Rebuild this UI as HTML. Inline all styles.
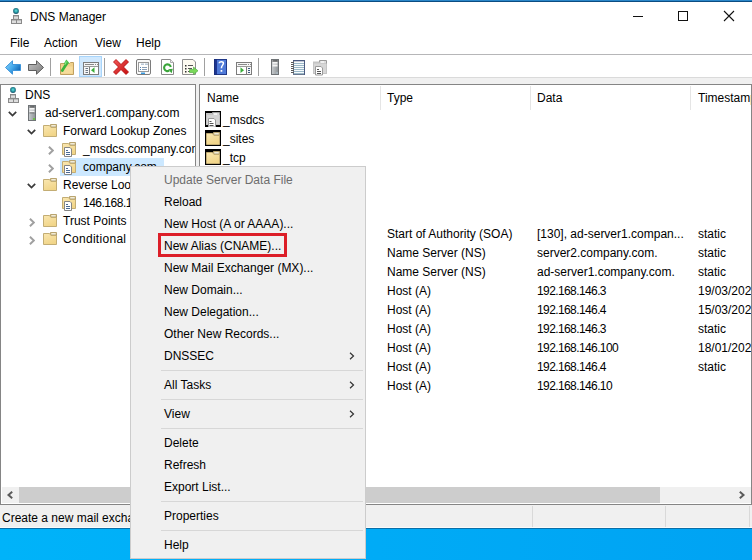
<!DOCTYPE html>
<html><head><meta charset="utf-8">
<style>
*{margin:0;padding:0;box-sizing:border-box}
html,body{width:752px;height:560px;overflow:hidden;background:#fff}
body{position:relative;font-family:"Liberation Sans",sans-serif;font-size:12px;color:#000}
.a{position:absolute}
.t{position:absolute;font:12px/14px "Liberation Sans",sans-serif;white-space:nowrap}
svg{position:absolute;overflow:visible}
</style></head><body>
<svg width="0" height="0" style="position:absolute">
<defs>
 <linearGradient id="fg" x1="0" y1="0" x2="0.4" y2="1"><stop offset="0" stop-color="#fae7b0"/><stop offset="1" stop-color="#f1d589"/></linearGradient>
 <linearGradient id="sg" x1="0" y1="0" x2="1" y2="0"><stop offset="0" stop-color="#c9cdd0"/><stop offset="1" stop-color="#8d9295"/></linearGradient>
 <radialGradient id="glb" cx="0.5" cy="0.45" r="0.55"><stop offset="0" stop-color="#6fe0e0"/><stop offset="0.5" stop-color="#2aa0a8"/><stop offset="1" stop-color="#18506a"/></radialGradient>
 <symbol id="dnsic" viewBox="0 0 12 16">
  <circle cx="5" cy="3" r="2.9" fill="url(#glb)"/>
  <rect x="2.5" y="7.5" width="5" height="3.5" fill="#bdbdbd" stroke="#8a8a8a"/>
  <rect x="3" y="9.5" width="4" height="1" fill="#fff"/>
  <rect x="0.5" y="11.5" width="5" height="4" fill="#bdbdbd" stroke="#8a8a8a"/>
  <rect x="5.5" y="11.5" width="5" height="4" fill="#bdbdbd" stroke="#8a8a8a"/>
  <rect x="1" y="13.5" width="4" height="1" fill="#fff"/>
  <rect x="6" y="13.5" width="4" height="1" fill="#fff"/>
 </symbol>
 <symbol id="folder" viewBox="0 0 14 13">
  <path d="M7.5 0.5H13.5V6H7.5Z" fill="#e2cf98" stroke="#b9a470"/>
  <rect x="8.5" y="1.2" width="4" height="1.5" fill="#f6f3e8"/>
  <rect x="8" y="2.7" width="5.5" height="0.9" fill="#8f8262"/>
  <path d="M0.5 1.5H6.5L8 3.5H13.5V12.5H0.5Z" fill="url(#fg)" stroke="#c3ad74"/>
 </symbol>
 <symbol id="zone" viewBox="0 0 16 16">
  <path d="M7.5 0.5H13.5V6H7.5Z" fill="#e2cf98" stroke="#b9a470"/>
  <rect x="8.5" y="1.2" width="4" height="1.5" fill="#f6f3e8"/>
  <rect x="8" y="2.7" width="5.5" height="0.9" fill="#8f8262"/>
  <path d="M0.5 1.5H6.5L8 3.5H13.5V12.5H0.5Z" fill="url(#fg)" stroke="#c3ad74"/>
  <path d="M2.5 5.5H8L9.5 7V14.5H2.5Z" fill="#fff" stroke="#858585"/>
  <rect x="4" y="8" width="2" height="1" fill="#4a6a94"/>
  <rect x="4" y="10" width="4" height="1" fill="#4a6a94"/>
  <rect x="4" y="12" width="4" height="1" fill="#4a6a94"/>
 </symbol>
 <symbol id="server" viewBox="0 0 8 16">
  <rect x="0.5" y="0.5" width="7" height="15" fill="url(#sg)" stroke="#6f7376"/>
  <rect x="1.5" y="1.5" width="5" height="1.2" fill="#2c2c2c"/>
  <rect x="1.5" y="2.7" width="5" height="2" fill="#f4f4f4"/>
  <rect x="1.5" y="5.5" width="5" height="2" fill="#f4f4f4"/>
  <rect x="1.5" y="7.5" width="5" height="0.8" fill="#555"/>
  <rect x="5" y="13" width="2" height="2" fill="#6cc04a"/>
 </symbol>
 <symbol id="chd" viewBox="0 0 9 6"><path d="M0.8 0.8L4.5 4.6L8.2 0.8" fill="none" stroke="#3a3a3a" stroke-width="1.7"/></symbol>
 <symbol id="chr" viewBox="0 0 6 9"><path d="M0.9 0.8L4.8 4.5L0.9 8.2" fill="none" stroke="#a0a0a0" stroke-width="1.9"/></symbol>

 <symbol id="folder16" viewBox="0 0 16 16">
  <rect width="16" height="16" fill="#000"/>
  <g transform="translate(1,2)">
  <path d="M7.5 0.5H13.5V6H7.5Z" fill="#e2cf98" stroke="#b9a470"/>
  <rect x="8.5" y="1.2" width="4" height="1.5" fill="#f6f3e8"/>
  <rect x="8" y="2.7" width="5.5" height="0.9" fill="#8f8262"/>
  <path d="M0.5 1.5H6.5L8 3.5H13.5V12.5H0.5Z" fill="url(#fg)" stroke="#c3ad74"/>
  </g>
 </symbol>
 <symbol id="zone16" viewBox="0 0 16 16">
  <rect width="16" height="16" fill="#000"/>
  <g transform="translate(1,1)">
  <path d="M6.5 0.5H13.5V6H6.5Z" fill="#d8d8d8" stroke="#a0a0a0"/>
  <rect x="8" y="1.3" width="3" height="1.6" fill="#f8f8f8"/>
  <path d="M0 1H6L7.5 3H14V13H0Z" fill="#c4c4c4"/>
  <rect x="1" y="3" width="12" height="9" fill="#d4d4d4"/>
  <path d="M2.5 6.5H8L9.5 8V15H2.5Z" fill="#fff" stroke="#9a9a9a"/>
  <rect x="3.5" y="9" width="2" height="1" fill="#555"/>
  <rect x="3.5" y="11" width="4" height="1" fill="#555"/>
  <rect x="3.5" y="13" width="4" height="1" fill="#555"/>
  </g>
 </symbol>
</defs></svg>
<!-- top border -->
<div class="a" style="left:0;top:0;width:752px;height:1px;background:#2b87c9"></div>
<div class="a" style="left:0;top:1px;width:752px;height:1px;background:#0b4d82"></div>

<!-- title -->
<svg style="left:11px;top:8px" width="12" height="16"><use href="#dnsic"/></svg>
<div class="t" style="left:30px;top:10px">DNS Manager</div>
<!-- window controls -->
<div class="a" style="left:633px;top:16px;width:10px;height:1px;background:#111"></div>
<div class="a" style="left:678px;top:11px;width:10px;height:10px;border:1px solid #111"></div>
<svg style="left:724px;top:11px" width="10" height="10" viewBox="0 0 10 10"><path d="M0 0L10 10M10 0L0 10" stroke="#111" stroke-width="1.1"/></svg>

<!-- toolbar icons -->
<svg style="left:0;top:0" width="752" height="80" viewBox="0 0 752 80">
 <defs>
  <linearGradient id="bl" x1="0" y1="0.2" x2="1" y2="0.8"><stop offset="0" stop-color="#86d0f8"/><stop offset="0.45" stop-color="#45aaec"/><stop offset="1" stop-color="#0b5eae"/></linearGradient>
  <linearGradient id="gr" x1="0" y1="0" x2="1" y2="1"><stop offset="0" stop-color="#c4c4c4"/><stop offset="1" stop-color="#7d7d7d"/></linearGradient>
  <linearGradient id="rd" x1="0" y1="0" x2="1" y2="1"><stop offset="0" stop-color="#f25a5a"/><stop offset="1" stop-color="#c40d0d"/></linearGradient>
  <linearGradient id="hb" x1="0" y1="0" x2="1" y2="0"><stop offset="0" stop-color="#1f3f9a"/><stop offset="0.25" stop-color="#3560c8"/><stop offset="1" stop-color="#4a74d8"/></linearGradient>
 </defs>
 <!-- back -->
 <path d="M5.5 67.5 L12.5 60.8 V64.5 H20.5 V70.5 H12.5 V74.2 Z" fill="url(#bl)" stroke="#3d94da" stroke-width="1" stroke-linejoin="round"/>
 <!-- forward -->
 <path d="M43.5 67.5 L36.5 60.8 V64.5 H28.5 V70.5 H36.5 V74.2 Z" fill="url(#gr)" stroke="#5e5e5e" stroke-width="1" stroke-linejoin="round"/>
 <rect x="50" y="58" width="1" height="18" fill="#a0a0a0"/>
 <!-- up folder -->
 <path d="M60.5 63.5 H69.5 L70.5 62.5 H73.5 V74.5 H60.5 Z" fill="#efd08a" stroke="#c0a060"/>
 <path d="M61.5 66.5 H72.5 V73.5 H61.5Z" fill="#f6dc9c"/>
 <path d="M62.3 70.5 C63.5 68.5, 64.5 67, 66.8 63.5" fill="none" stroke="#3cb43c" stroke-width="2.8" stroke-linecap="round"/>
 <path d="M63.6 64 L66.3 59.6 L69.6 63.2 Z" fill="#4cc44c"/>
 <path d="M65.3 64.5 L66.2 61.3" stroke="#8ee88e" stroke-width="1"/>
 <!-- pressed console tree -->
 <rect x="79.5" y="56.5" width="22" height="20" fill="#d0e8fd" stroke="#a8d5fb"/>
 <rect x="83.5" y="62.5" width="15" height="12" fill="#f6f6f6" stroke="#7c7c7c"/>
 <rect x="85" y="64" width="9" height="1" fill="#8a8a8a"/><rect x="95" y="64" width="1" height="1" fill="#8a8a8a"/><rect x="97" y="64" width="1" height="1" fill="#8a8a8a"/>
 <rect x="84" y="66" width="14" height="1" fill="#9a9a9a"/>
 <rect x="89" y="67" width="1" height="7" fill="#7c7c7c"/>
 <rect x="85.5" y="68" width="2.5" height="1" fill="#6a7684"/><rect x="85.5" y="70" width="2.5" height="1" fill="#6a7684"/><rect x="85.5" y="72" width="2.5" height="1" fill="#6a7684"/>
 <rect x="90" y="67" width="8" height="7" fill="#fff"/>
 <path d="M94.5 67.3 V73 L91 70.2Z" fill="#3aae3a"/>
 <rect x="104" y="58" width="1" height="18" fill="#a0a0a0"/>
 <!-- red X -->
 <path d="M113.5 62 L116 59.5 L121 64.5 L126 59.5 L128.5 62 L123.5 67 L128.5 72 L126 74.5 L121 69.5 L116 74.5 L113.5 72 L118.5 67 Z" fill="url(#rd)" stroke="#b00000" stroke-width="0.8" stroke-linejoin="round"/>
 <!-- properties -->
 <rect x="136.5" y="59.5" width="14" height="15" rx="1.5" fill="#fafafa" stroke="#7c7c7c"/>
 <rect x="138.5" y="62.5" width="10" height="9" fill="#fff" stroke="#9a9a9a"/>
 <rect x="141" y="63.5" width="3" height="1.5" fill="#b8c8d8"/><rect x="145" y="63.5" width="3" height="1.5" fill="#b8c8d8"/>
 <rect x="140" y="67" width="1" height="1" fill="#4a80b8"/><rect x="142" y="67" width="5" height="1" fill="#8aa0b8"/>
 <rect x="140" y="69" width="1" height="1" fill="#4a80b8"/><rect x="142" y="69" width="5" height="1" fill="#8aa0b8"/>
 <rect x="141" y="72.5" width="4" height="1.5" fill="#3a9ae0"/>
 <!-- refresh -->
 <path d="M161.5 59.5 H170.5 L173.5 62.5 V74.5 H161.5 Z" fill="#fff" stroke="#8a8a8a"/>
 <path d="M170.5 59.5 V62.5 H173.5" fill="#f0f0f0" stroke="#9a9a9a" stroke-width="0.8"/>
 <path d="M170.8 66.9 A3.4 3.4 0 1 0 169.2 70.7" fill="none" stroke="#3aa53a" stroke-width="2.1"/>
 <path d="M168.2 69.2 L172.8 68.8 L171.6 73.2 Z" fill="#3aa53a"/>
 <!-- export -->
 <path d="M182.5 59.5 H193 L195.5 62 V74.5 H182.5 Z" fill="#fdfaf0" stroke="#8e8e8e"/>
 <rect x="185" y="65" width="1.5" height="1.5" fill="#333"/><rect x="188" y="65" width="5" height="1" fill="#555"/>
 <rect x="185" y="68" width="1.5" height="1.5" fill="#333"/><rect x="188" y="68" width="4" height="1" fill="#555"/>
 <rect x="185" y="71" width="1.5" height="1.5" fill="#333"/><rect x="188" y="71" width="3" height="1" fill="#555"/>
 <path d="M189.5 69.5 H193.5 V67 L198 70.8 L193.5 74.5 V72.5 H189.5Z" fill="#7ad85a" stroke="#4aa83a" stroke-width="0.6"/>
 <rect x="204" y="58" width="1" height="18" fill="#a0a0a0"/>
 <!-- help -->
 <rect x="214" y="59" width="13" height="16" fill="#3c64c8"/>
 <rect x="217" y="60" width="9" height="14" fill="#4f7ad8"/>
 <rect x="214" y="59" width="3" height="16" fill="#1d3590"/>
 <rect x="214.4" y="59.4" width="12.2" height="15.2" fill="none" stroke="#1a2e78" stroke-width="0.8"/>
 <path d="M219.2 63.2 C219.2 61.3, 223.4 61.3, 223.4 63.3 C223.4 65, 221.4 65.4, 221.4 68.3" fill="none" stroke="#fff" stroke-width="1.5"/>
 <rect x="220.6" y="70" width="1.7" height="1.8" fill="#fff"/>
 <!-- action pane -->
 <rect x="236.5" y="62.5" width="15" height="12" fill="#f6f6f6" stroke="#7c7c7c"/>
 <rect x="238" y="64" width="9" height="1" fill="#8a8a8a"/><rect x="248" y="64" width="1" height="1" fill="#8a8a8a"/><rect x="250" y="64" width="1" height="1" fill="#8a8a8a"/>
 <rect x="237" y="66" width="14" height="1" fill="#9a9a9a"/>
 <rect x="246" y="67" width="1" height="7" fill="#7c7c7c"/>
 <rect x="237" y="67" width="9" height="7" fill="#fff"/>
 <path d="M240.5 67.3 V73 L244 70.2Z" fill="#3aae3a"/>
 <rect x="248" y="68" width="2" height="1" fill="#3a5a80"/><rect x="248" y="70" width="2" height="1" fill="#3a5a80"/><rect x="248" y="72" width="2" height="1" fill="#3a5a80"/>
 <rect x="258" y="58" width="1" height="18" fill="#a0a0a0"/>
 <!-- server -->
 <rect x="271.5" y="59.5" width="7" height="15" fill="url(#sg)" stroke="#6f7376"/>
 <rect x="272.5" y="60.5" width="5" height="1.2" fill="#2c2c2c"/>
 <rect x="272.5" y="61.7" width="5" height="2" fill="#f4f4f4"/>
 <rect x="272.5" y="64.5" width="5" height="2" fill="#f4f4f4"/>
 <rect x="276" y="72" width="2" height="2" fill="#a8b4bc"/>
 <!-- notepad -->
 <rect x="293.5" y="60.5" width="11" height="14" fill="#f6fafc" stroke="#6a7890"/>
 <rect x="293" y="60" width="12" height="1.3" fill="#4a5a80"/>
 <rect x="304" y="60" width="1" height="15" fill="#4a5a80"/>
 <rect x="294" y="63" width="10" height="1" fill="#9ab8c8"/><rect x="294" y="65" width="10" height="1" fill="#9ab8c8"/>
 <rect x="294" y="67" width="10" height="1" fill="#9ab8c8"/><rect x="294" y="69" width="10" height="1" fill="#9ab8c8"/>
 <rect x="294" y="71" width="10" height="1" fill="#9ab8c8"/><rect x="294" y="73" width="10" height="1" fill="#9ab8c8"/>
 <path d="M291 62.5h3M291 64.5h3M291 66.5h3M291 68.5h3M291 70.5h3M291 72.5h3" stroke="#5a5a5a" stroke-width="1"/>
 <!-- zone copy -->
 <path d="M319.5 60.5H326.5V64H319.5Z" fill="#dcdcdc" stroke="#9a9a9a"/>
 <rect x="321" y="61.3" width="3" height="1.4" fill="#f8f8f8"/>
 <path d="M313 61.5H319L320.5 63.5H327V74H313Z" fill="#c4c4c4"/>
 <rect x="314" y="63.5" width="12" height="9.5" fill="#d6d6d6"/>
 <path d="M315.5 66.5H321L322.5 68V75H315.5Z" fill="#fff" stroke="#9a9a9a"/>
 <rect x="317" y="69" width="2" height="1" fill="#555"/>
 <rect x="317" y="71" width="4" height="1" fill="#555"/>
 <rect x="317" y="73" width="4" height="1" fill="#555"/>
</svg>
<!-- menu bar -->
<div class="t" style="left:10px;top:36px">File</div>
<div class="t" style="left:44px;top:36px">Action</div>
<div class="t" style="left:95px;top:36px">View</div>
<div class="t" style="left:136px;top:36px">Help</div>
<div class="a" style="left:0;top:54px;width:752px;height:1px;background:#b6b6b8"></div>

<!-- toolbar -->
<div class="a" style="left:0;top:77px;width:752px;height:451px;background:#f0f0f0"></div>
<div class="a" style="left:0;top:77px;width:752px;height:1px;background:#dadada"></div>

<!-- left pane -->
<div class="a" style="left:0;top:84px;width:196px;height:421px;background:#fff;border:1px solid #858585"></div>
<!-- tree -->
<div class="a" style="left:0;top:0;width:195px;height:487px;overflow:hidden">
 <div class="a" style="left:60px;top:158px;width:104px;height:18px;background:#cce8ff"></div>
 <svg style="left:8px;top:87px" width="12" height="16"><use href="#dnsic"/></svg>
 <div class="t" style="left:25px;top:88px">DNS</div>
 <svg style="left:8px;top:111px" width="9" height="6"><use href="#chd"/></svg>
 <svg style="left:28px;top:105px" width="8" height="16"><use href="#server"/></svg>
 <div class="t" style="left:45px;top:106px">ad-server1.company.com</div>
 <svg style="left:27px;top:129px" width="9" height="6"><use href="#chd"/></svg>
 <svg style="left:43px;top:124px" width="14" height="13"><use href="#folder"/></svg>
 <div class="t" style="left:63px;top:124px">Forward Lookup Zones</div>
 <svg style="left:48px;top:146px" width="6" height="9"><use href="#chr"/></svg>
 <svg style="left:62px;top:142px" width="16" height="16"><use href="#zone"/></svg>
 <div class="t" style="left:83px;top:142px">_msdcs.company.com</div>
 <svg style="left:48px;top:164px" width="6" height="9"><use href="#chr"/></svg>
 <svg style="left:62px;top:160px" width="16" height="16"><use href="#zone"/></svg>
 <div class="t" style="left:83px;top:160px">company.com</div>
 <svg style="left:27px;top:183px" width="9" height="6"><use href="#chd"/></svg>
 <svg style="left:43px;top:178px" width="14" height="13"><use href="#folder"/></svg>
 <div class="t" style="left:63px;top:178px">Reverse Lookup Zones</div>
 <svg style="left:62px;top:196px" width="16" height="16"><use href="#zone"/></svg>
 <div class="t" style="left:83px;top:196px;letter-spacing:-0.5px">146.168.192.in-addr.arpa</div>
 <svg style="left:29px;top:218px" width="6" height="9"><use href="#chr"/></svg>
 <svg style="left:43px;top:214px" width="14" height="13"><use href="#folder"/></svg>
 <div class="t" style="left:63px;top:214px">Trust Points</div>
 <svg style="left:29px;top:236px" width="6" height="9"><use href="#chr"/></svg>
 <svg style="left:43px;top:232px" width="14" height="13"><use href="#folder"/></svg>
 <div class="t" style="left:63px;top:232px;letter-spacing:0.3px">Conditional</div>
</div>
<!-- left scrollbar -->
<div class="a" style="left:2px;top:487px;width:193px;height:16px;background:#f0f0f0"></div>
<div class="a" style="left:19px;top:487px;width:150px;height:16px;background:#cdcdcd"></div>
<svg style="left:7px;top:491px" width="6" height="8" viewBox="0 0 6 8"><path d="M5.2 0.8L1.5 4L5.2 7.2" fill="none" stroke="#5a5a5a" stroke-width="2"/></svg>
<!-- right pane -->
<div class="a" style="left:199px;top:84px;width:553px;height:421px;background:#fff;border:1px solid #858585"></div>

<!-- list -->
<div class="a" style="left:200px;top:85px;width:551px;height:402px;overflow:hidden">
 <div class="t" style="left:7px;top:6px">Name</div>
 <div class="a" style="left:180px;top:1px;width:1px;height:24px;background:#e5e5e5"></div>
 <div class="t" style="left:187px;top:6px">Type</div>
 <div class="a" style="left:330px;top:1px;width:1px;height:24px;background:#e5e5e5"></div>
 <div class="t" style="left:337px;top:6px">Data</div>
 <div class="a" style="left:490px;top:1px;width:1px;height:24px;background:#e5e5e5"></div>
 <div class="t" style="left:498px;top:6px">Timestamp</div>
 <svg style="left:5px;top:26px" width="16" height="16" viewBox="0 0 16 16"><rect width="16" height="16" fill="#000"/><use href="#zone16"/></svg>
 <div class="t" style="left:23px;top:28px">_msdcs</div>
 <svg style="left:5px;top:45px" width="16" height="16" viewBox="0 0 16 16"><rect width="16" height="16" fill="#000"/><use href="#folder16"/></svg>
 <div class="t" style="left:23px;top:47px">_sites</div>
 <svg style="left:5px;top:64px" width="16" height="16" viewBox="0 0 16 16"><rect width="16" height="16" fill="#000"/><use href="#folder16"/></svg>
 <div class="t" style="left:23px;top:66px">_tcp</div>
 <svg style="left:5px;top:83px" width="16" height="16" viewBox="0 0 16 16"><rect width="16" height="16" fill="#000"/><use href="#folder16"/></svg>
 <div class="t" style="left:23px;top:85px">_udp</div>
 <svg style="left:5px;top:102px" width="16" height="16" viewBox="0 0 16 16"><rect width="16" height="16" fill="#000"/><use href="#folder16"/></svg>
 <div class="t" style="left:23px;top:104px">DomainDnsZones</div>
 <svg style="left:5px;top:121px" width="16" height="16" viewBox="0 0 16 16"><rect width="16" height="16" fill="#000"/><use href="#folder16"/></svg>
 <div class="t" style="left:23px;top:123px">ForestDnsZones</div>
 <div class="t" style="left:23px;top:142px">(same as parent folder)</div>
 <div class="t" style="left:187px;top:142px">Start of Authority (SOA)</div>
 <div class="t" style="left:337px;top:142px">[130], ad-server1.compan...</div>
 <div class="t" style="left:498px;top:142px">static</div>
 <div class="t" style="left:23px;top:161px">(same as parent folder)</div>
 <div class="t" style="left:187px;top:161px">Name Server (NS)</div>
 <div class="t" style="left:337px;top:161px">server2.company.com.</div>
 <div class="t" style="left:498px;top:161px">static</div>
 <div class="t" style="left:23px;top:180px">(same as parent folder)</div>
 <div class="t" style="left:187px;top:180px">Name Server (NS)</div>
 <div class="t" style="left:337px;top:180px">ad-server1.company.com.</div>
 <div class="t" style="left:498px;top:180px">static</div>
 <div class="t" style="left:23px;top:199px">ad-server1</div>
 <div class="t" style="left:187px;top:199px">Host (A)</div>
 <div class="t" style="left:337px;top:199px;letter-spacing:-0.6px">192.168.146.3</div>
 <div class="t" style="left:498px;top:199px">19/03/2024 11:00:00</div>
 <div class="t" style="left:23px;top:218px">ad-server2</div>
 <div class="t" style="left:187px;top:218px">Host (A)</div>
 <div class="t" style="left:337px;top:218px;letter-spacing:-0.6px">192.168.146.4</div>
 <div class="t" style="left:498px;top:218px">15/03/2024 10:00:00</div>
 <div class="t" style="left:23px;top:237px">ad-server1</div>
 <div class="t" style="left:187px;top:237px">Host (A)</div>
 <div class="t" style="left:337px;top:237px;letter-spacing:-0.6px">192.168.146.3</div>
 <div class="t" style="left:498px;top:237px">static</div>
 <div class="t" style="left:23px;top:256px">DESKTOP</div>
 <div class="t" style="left:187px;top:256px">Host (A)</div>
 <div class="t" style="left:337px;top:256px;letter-spacing:-0.6px">192.168.146.100</div>
 <div class="t" style="left:498px;top:256px">18/01/2024 09:00:00</div>
 <div class="t" style="left:23px;top:275px">server2</div>
 <div class="t" style="left:187px;top:275px">Host (A)</div>
 <div class="t" style="left:337px;top:275px;letter-spacing:-0.6px">192.168.146.4</div>
 <div class="t" style="left:498px;top:275px">static</div>
 <div class="t" style="left:23px;top:294px">web</div>
 <div class="t" style="left:187px;top:294px">Host (A)</div>
 <div class="t" style="left:337px;top:294px;letter-spacing:-0.6px">192.168.146.10</div>
 <div class="t" style="left:498px;top:294px"></div>
</div>
<!-- right scrollbar -->
<div class="a" style="left:200px;top:487px;width:551px;height:16px;background:#f0f0f0"></div>
<div class="a" style="left:220px;top:487px;width:440px;height:16px;background:#cdcdcd"></div>
<svg style="left:739px;top:491px" width="6" height="8" viewBox="0 0 6 8"><path d="M0.8 0.8L4.5 4L0.8 7.2" fill="none" stroke="#5a5a5a" stroke-width="2"/></svg>
<!-- status bar -->
<div class="t" style="left:2px;top:511px">Create a new mail exchanger</div>
<div class="a" style="left:532px;top:506px;width:1px;height:21px;background:#d9d9d9"></div>
<div class="a" style="left:665px;top:506px;width:1px;height:21px;background:#d9d9d9"></div>
<div class="a" style="left:749px;top:506px;width:1px;height:21px;background:#d9d9d9"></div>

<!-- desktop -->
<div class="a" style="left:0;top:527px;width:752px;height:1px;background:#fafafa"></div>
<div class="a" style="left:0;top:528px;width:752px;height:1px;background:#0a6fa8"></div>
<div class="a" style="left:0;top:529px;width:752px;height:31px;background:linear-gradient(90deg,#00b3f9,#00a3f3)"></div>

<!-- context menu -->
<div class="a" style="left:130px;top:166px;width:236px;height:393px;background:#f0f0f0;border:1px solid #cccccc"></div>
<div class="t" style="left:164px;top:173px;color:#6d6d6d">Update Server Data File</div>
<div class="t" style="left:164px;top:195px;color:#000">Reload</div>
<div class="t" style="left:164px;top:217px;color:#000">New Host (A or AAAA)...</div>
<div class="t" style="left:164px;top:239px;color:#000">New Alias (CNAME)...</div>
<div class="t" style="left:164px;top:261px;color:#000">New Mail Exchanger (MX)...</div>
<div class="t" style="left:164px;top:283px;color:#000">New Domain...</div>
<div class="t" style="left:164px;top:305px;color:#000">New Delegation...</div>
<div class="t" style="left:164px;top:327px;color:#000">Other New Records...</div>
<div class="t" style="left:164px;top:349px;color:#000">DNSSEC</div>
<svg style="left:349px;top:352px" width="6" height="8" viewBox="0 0 6 8"><path d="M1 0.8L4.5 4L1 7.2" fill="none" stroke="#333" stroke-width="1.2"/></svg>
<div class="a" style="left:161px;top:370px;width:202px;height:1px;background:#d7d7d7"></div>
<div class="t" style="left:164px;top:378px;color:#000">All Tasks</div>
<svg style="left:349px;top:381px" width="6" height="8" viewBox="0 0 6 8"><path d="M1 0.8L4.5 4L1 7.2" fill="none" stroke="#333" stroke-width="1.2"/></svg>
<div class="a" style="left:161px;top:399px;width:202px;height:1px;background:#d7d7d7"></div>
<div class="t" style="left:164px;top:407px;color:#000">View</div>
<svg style="left:349px;top:410px" width="6" height="8" viewBox="0 0 6 8"><path d="M1 0.8L4.5 4L1 7.2" fill="none" stroke="#333" stroke-width="1.2"/></svg>
<div class="a" style="left:161px;top:428px;width:202px;height:1px;background:#d7d7d7"></div>
<div class="t" style="left:164px;top:436px;color:#000">Delete</div>
<div class="t" style="left:164px;top:458px;color:#000">Refresh</div>
<div class="t" style="left:164px;top:480px;color:#000">Export List...</div>
<div class="a" style="left:161px;top:501px;width:202px;height:1px;background:#d7d7d7"></div>
<div class="t" style="left:164px;top:509px;color:#000">Properties</div>
<div class="a" style="left:161px;top:530px;width:202px;height:1px;background:#d7d7d7"></div>
<div class="t" style="left:164px;top:538px;color:#000">Help</div>
<div class="a" style="left:158px;top:233px;width:129px;height:24px;border:3px solid #dc1e28"></div>
</body></html>
